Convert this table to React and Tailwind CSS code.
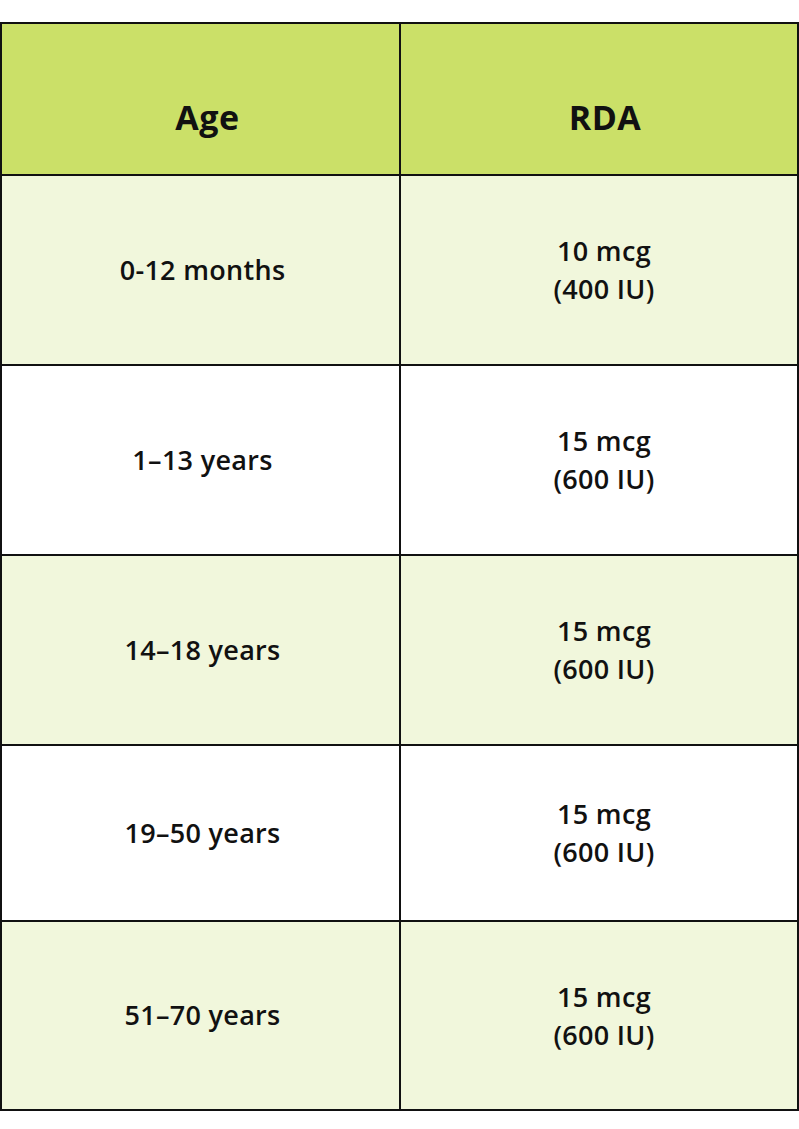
import React from 'react';

const rows = [
  { age: '0-12 months', mcg: '10 mcg', iu: '(400 IU)', tint: true, h: 'h-[190px]' },
  { age: '1–13 years', mcg: '15 mcg', iu: '(600 IU)', tint: false, h: 'h-[190px]' },
  { age: '14–18 years', mcg: '15 mcg', iu: '(600 IU)', tint: true, h: 'h-[190px]' },
  { age: '19–50 years', mcg: '15 mcg', iu: '(600 IU)', tint: false, h: 'h-[176px]' },
  { age: '51–70 years', mcg: '15 mcg', iu: '(600 IU)', tint: true, h: 'h-[189px]' },
];

export default function App() {
  return (
    <div className="bg-white min-h-screen pt-[22px] font-['Open_Sans',sans-serif] text-[#111]">
      <table className="w-full border-collapse table-fixed">
        <thead>
          {/* Header */}
          <tr className="bg-[#cbe068] h-[152px]">
            <th className="w-[399px] border-2 border-[#111] pt-[36px] pl-[14px] text-[34px] font-bold tracking-[0.5px]">Age</th>
            <th className="border-2 border-[#111] pt-[36px] pl-[12px] text-[34px] font-bold tracking-[0.5px]">RDA</th>
          </tr>
        </thead>
        <tbody>
          {rows.map((r) => (
            <tr key={r.age} className={`${r.h} ${r.tint ? 'bg-[#f1f7dc]' : 'bg-white'}`}>
              <td className="border-2 border-[#111] pl-[4px] text-center text-[27px] font-semibold tracking-[0.3px]">{r.age}</td>
              <td className="border-2 border-[#111] pl-[10px] text-center text-[27px] font-semibold tracking-[0.3px] leading-[38px]">
                {r.mcg}
                <br />
                {r.iu}
              </td>
            </tr>
          ))}
        </tbody>
      </table>
    </div>
  );
}
